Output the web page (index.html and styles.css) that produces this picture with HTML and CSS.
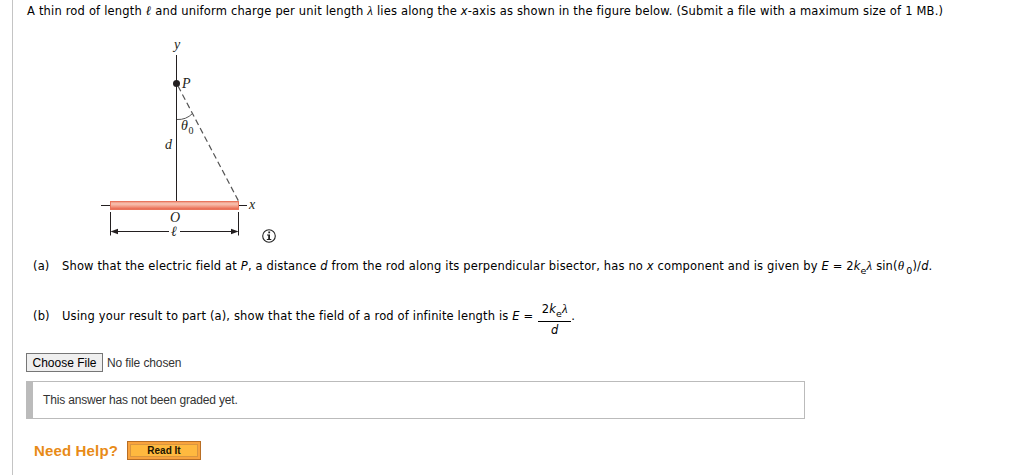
FILE: index.html
```
<!DOCTYPE html>
<html lang="en">
  <head>
    <meta charset="UTF-8" />
    <meta name="viewport" content="width=device-width, initial-scale=1.0" />
    <title>Electric field of a thin rod</title>
    <link rel="stylesheet" href="styles.css">
  </head>

  <body>
    <div class="question">
      <p class="intro">A thin rod of length <i class="sym">ℓ</i> and uniform charge per unit length <i class="sym">λ</i> lies along the <i>x</i>-axis as shown in the figure below. (Submit a file with a maximum size of 1 MB.)</p>

      <svg class="figure" width="264" height="214" viewBox="26 32 264 214">
        <defs>
          <linearGradient id="rod" x1="0" y1="0" x2="0" y2="1">
            <stop offset="0" stop-color="#ee8c74" />
            <stop offset="0.3" stop-color="#f8c4b3" />
            <stop offset="0.6" stop-color="#f29c86" />
            <stop offset="1" stop-color="#e85f45" />
          </linearGradient>
        </defs>
        <!-- axes -->
        <path class="line" d="M176.5 55V201M101 205.5H110M239 205.5H247" />
        <circle cx="176.5" cy="83.5" r="3.5" fill="#231f20" />
        <path class="dash" d="M178 86L238.5 201" />
        <path class="arc" d="M177 119.5Q186 120 192.5 113.5" />
        <!-- rod -->
        <rect x="110.5" y="201.5" width="128" height="8" fill="url(#rod)" stroke="#e8765d" />
        <!-- length marker -->
        <path class="line" d="M110.5 212V235.5M238.5 212V235.5M112 231.5H169M180 231.5H237" />
        <path d="M110.5 231.5l7.5-2.8v5.6zM238.5 231.5l-7.5-2.8v5.6z" fill="#231f20" />
        <g class="label">
          <text x="174" y="49">y</text>
          <text x="182" y="88">P</text>
          <text x="181" y="130">θ</text>
          <text class="zero" x="188.5" y="134">0</text>
          <text x="165" y="149">d</text>
          <text x="249" y="209">x</text>
          <text x="170" y="222">O</text>
          <text x="171" y="236">ℓ</text>
        </g>
        <!-- info -->
        <circle cx="269" cy="236" r="6.3" fill="#fff" stroke="#222" stroke-width="1.1" />
        <path d="M268.3 231.6h1.8v1.7h-1.8zM267 234.4h3v4.6h1.3v1h-4.5v-1h1.4v-3.6h-1.2z" fill="#222" />
      </svg>

      <div class="part part-a">
        <span class="mark">(a)</span>
        <p>Show that the electric field at <i>P</i>, a distance <i>d</i> from the rod along its perpendicular bisector, has no <i>x</i> component and is given by <i>E</i> = 2<i>k</i><sub>e</sub><i class="sym">λ</i> sin(<i class="sym">θ</i><sub class="gap">0</sub>)/<i>d</i>.</p>
      </div>

      <div class="part part-b">
        <span class="mark">(b)</span>
        <p>Using your result to part (a), show that the field of a rod of infinite length is <i>E</i> =</p>
        <div class="fraction">
          <div class="top">2<i>k</i><sub>e</sub><i class="sym">λ</i></div>
          <div class="bottom"><i>d</i></div>
        </div>
        <span>.</span>
      </div>

      <div class="upload">
        <button>Choose File</button>
        <span>No file chosen</span>
      </div>

      <div class="graded">This answer has not been graded yet.</div>

      <div class="help">
        <span class="need">Need Help?</span>
        <button class="read">Read It</button>
      </div>
    </div>
  </body>
</html>
```
FILE: styles.css
```
* {
  margin: 0;
  padding: 0;
  box-sizing: border-box;
}

body {
  background-color: #fff;
  overflow: hidden;
}

.question {
  height: 475px;
  margin-left: 12px;
  padding: 3px 0 0 13px;
  border-left: 1px solid #c4c4c4;
  font-family: Verdana, "DejaVu Sans", sans-serif;
  font-size: 11.5px;
  line-height: 16px;
  color: #000;
  white-space: nowrap;
}

.sym {
  font-family: "Liberation Serif", "DejaVu Serif", serif;
  font-size: 13px;
  line-height: 1;
}

sub {
  font-size: 9.5px;
  line-height: 1;
  vertical-align: -4px;
}

.gap {
  margin-left: 2px;
}

.intro {
  padding-left: 1px;
  height: 29px;
  letter-spacing: 0.18px;
}

.figure {
  display: block;
}

.line {
  fill: none;
  stroke: #231f20;
}

.dash {
  stroke: #555;
  stroke-width: 1.2;
  stroke-dasharray: 6 3.5;
}

.arc {
  fill: none;
  stroke: #555;
}

.label {
  font-family: "Liberation Serif", serif;
  font-style: italic;
  font-size: 14px;
  fill: #231f20;
}

.label .zero {
  font-style: normal;
  font-size: 10px;
}

.part {
  display: flex;
  padding-left: 7px;
  letter-spacing: 0.15px;
}

.part-a {
  height: 46px;
  padding-top: 12px;
}

.part-b {
  height: 54px;
  align-items: center;
  padding-bottom: 6px;
}

.mark {
  width: 29px;
}

.fraction {
  width: 33px;
  margin: 7px 0 0 5px;
  text-align: center;
}

.fraction .top {
  height: 21px;
  border-bottom: 1px solid #000;
}

.fraction .bottom {
  height: 16px;
}

.upload {
  display: flex;
  align-items: center;
  height: 19px;
  margin-top: 7px;
  font: 12px/16px "Liberation Sans", Arial, sans-serif;
  letter-spacing: -0.12px;
  color: #333;
}

.upload button {
  width: 77px;
  height: 19px;
  margin-right: 4px;
  border: 1px solid #767676;
  background-color: #efefef;
  font: inherit;
  color: #000;
}

.graded {
  width: 779px;
  height: 38px;
  margin-top: 9px;
  padding-left: 10px;
  border: 1px solid #bbb;
  border-left-width: 7px;
  font: 12px/36px "Liberation Sans", Arial, sans-serif;
  letter-spacing: -0.17px;
  color: #333;
}

.help {
  display: flex;
  align-items: center;
  margin-top: 22px;
  padding-left: 8px;
  font-family: "Liberation Sans", Arial, sans-serif;
  font-weight: bold;
}

.need {
  width: 93px;
  font-size: 15px;
  letter-spacing: 0.15px;
  color: #e88b17;
}

.read {
  width: 74px;
  height: 19px;
  border: 1px solid #b86e25;
  background-color: #ffb93f;
  box-shadow: inset 0 0 0 2px #f9a33d, inset 0 0 0 3px #d99640;
  font: bold 10px/17px "Liberation Sans", Arial, sans-serif;
  color: #221500;
}
```
